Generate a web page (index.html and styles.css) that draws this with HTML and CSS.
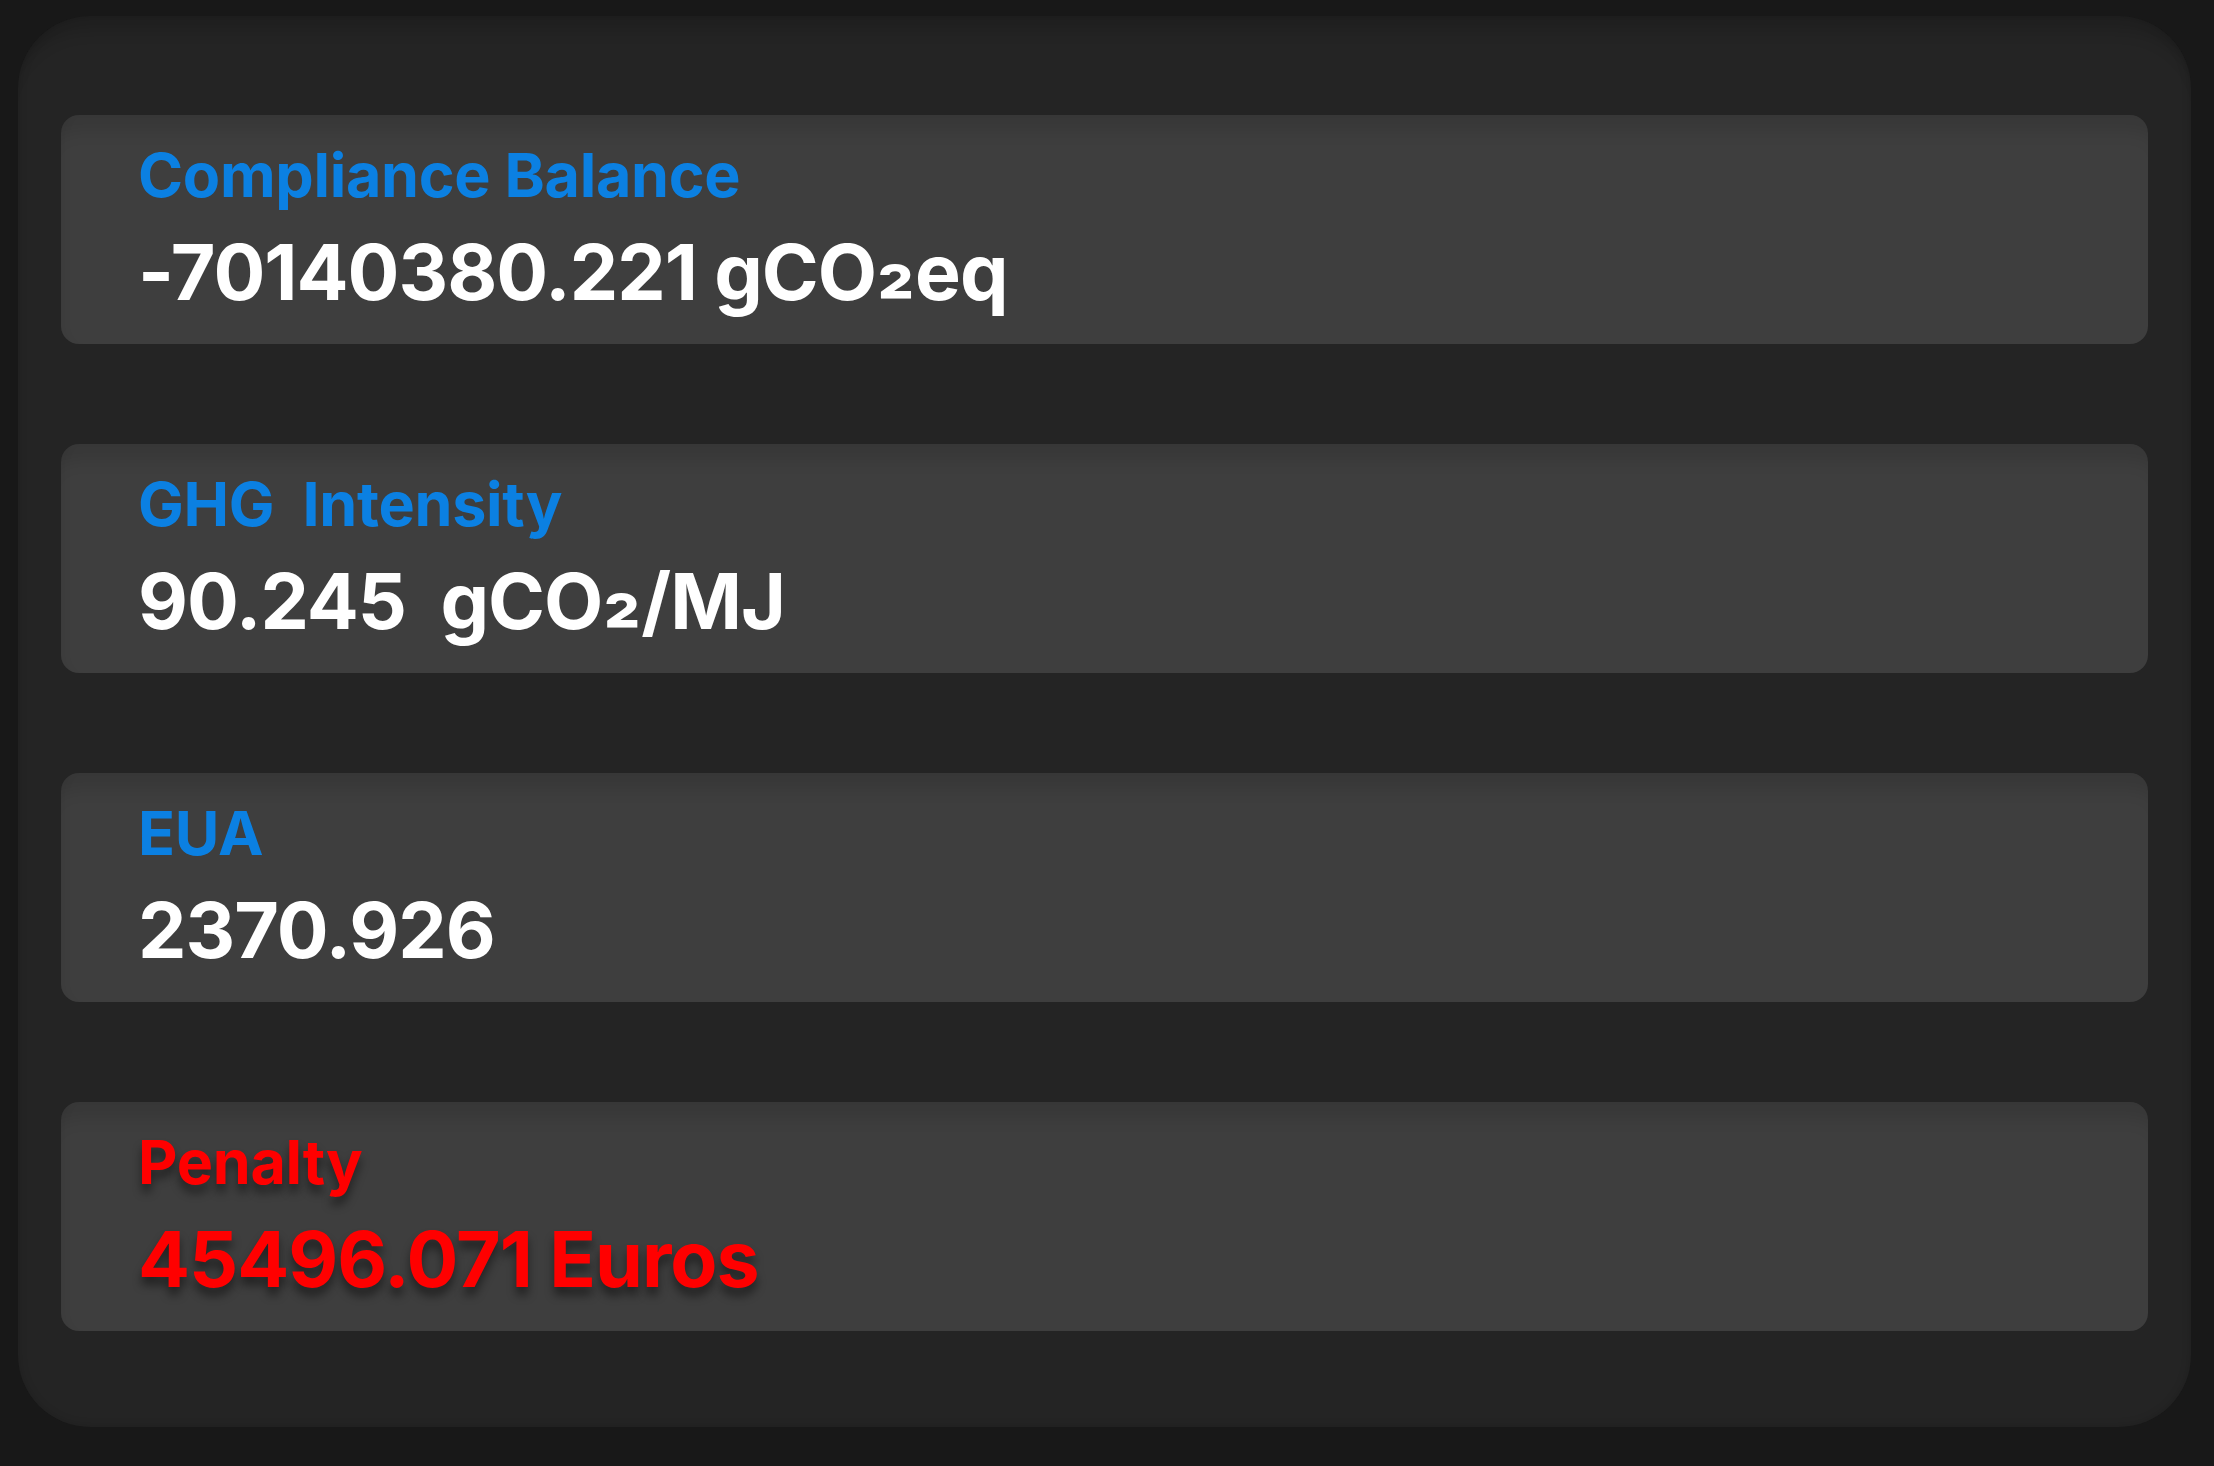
FILE: index.html
```html
<!DOCTYPE html>
<html lang="en">
<head>
<meta charset="utf-8">
<title>Compliance Summary</title>
<link rel="stylesheet" href="styles.css">
</head>
<body>
  <main class="panel">
    <section class="card">
      <div class="label">Compliance Balance</div>
      <div class="value">-70140380.221 gCO<span class="sub">₂</span>eq</div>
    </section>
    <section class="card">
      <div class="label">GHG&nbsp; Intensity</div>
      <div class="value">90.245&nbsp; gCO<span class="sub">₂</span>/MJ</div>
    </section>
    <section class="card">
      <div class="label">EUA</div>
      <div class="value">2370.926</div>
    </section>
    <section class="card card-alert">
      <div class="label">Penalty</div>
      <div class="value">45496.071 Euros</div>
    </section>
  </main>
</body>
</html>
```

FILE: styles.css
```css
html, body {
  margin: 0;
  padding: 0;
  background: #181818;
}

body {
  font-family: Inter, "Liberation Sans", Arial, sans-serif;
  height: 1466px;
  overflow: hidden;
}

.panel {
  margin: 16px 23px 0 18px;
  padding: 99px 43px 96px 43px;
  background: #242424;
  border-radius: 72px;
  display: flex;
  flex-direction: column;
  gap: 100px;
  box-shadow:
    inset 0 30px 14px -14px rgba(0, 0, 0, 0.12),
    inset 0 0 10px rgba(0, 0, 0, 0.18);
}

.card {
  background: #3e3e3e;
  border-radius: 18px;
  padding: 24px 40px 27px 77px;
  display: flex;
  flex-direction: column;
  gap: 16px;
  box-shadow:
    inset 0 32px 16px -16px rgba(0, 0, 0, 0.10),
    inset 10px 0 10px -8px rgba(0, 0, 0, 0.06);
}

.label {
  color: #0b80e2;
  font-size: 61px;
  line-height: 72px;
  font-weight: 700;
  letter-spacing: -0.3px;
  white-space: pre;
}

.value {
  color: #ffffff;
  font-size: 77px;
  line-height: 90px;
  font-weight: 700;
  letter-spacing: -1px;
  white-space: pre;
}

.sub {
  font-size: 1.1em;
  line-height: 0;
  vertical-align: 14px;
  letter-spacing: 0;
}

.card-alert .label,
.card-alert .value {
  color: #ff0000;
  text-shadow: 0 8px 10px rgba(0, 0, 0, 0.45);
}
```
